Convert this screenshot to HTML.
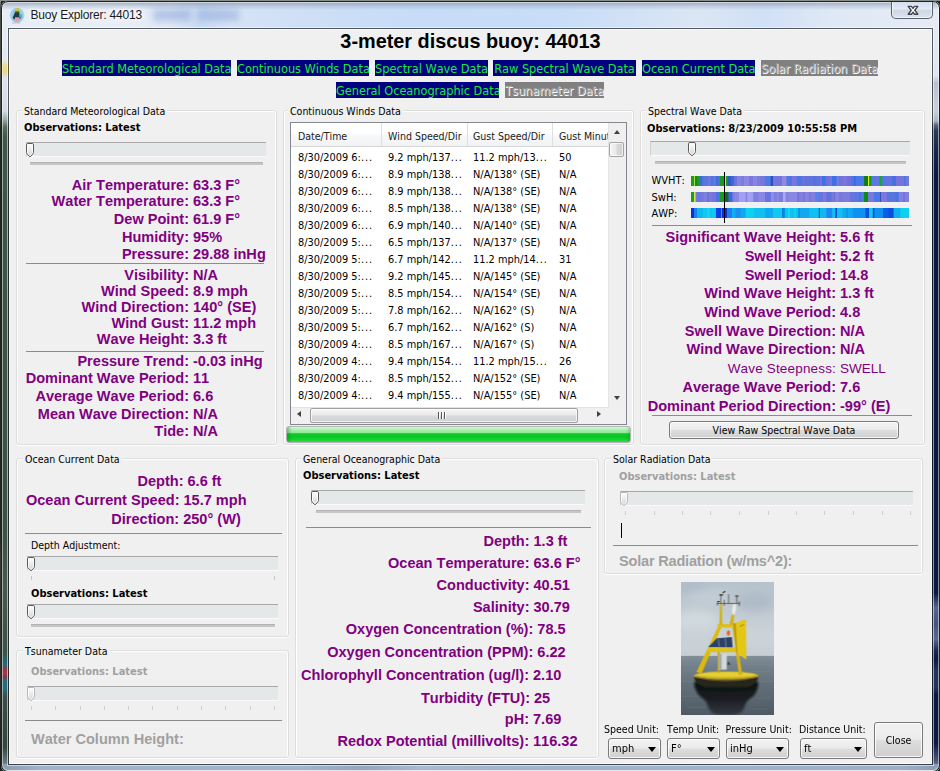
<!DOCTYPE html><html><head><meta charset="utf-8"><title>Buoy Explorer: 44013</title><style>
*{box-sizing:border-box;margin:0;padding:0}
html,body{width:940px;height:771px;overflow:hidden;background:#1c2820}
body{position:relative;font-kerning:none;font-stretch:condensed;font-family:"DejaVu Sans Condensed","DejaVu Sans","Liberation Sans",sans-serif;font-size:10.5px;color:#000}
div,span,svg{position:absolute}
#win{left:1px;top:1px;width:939px;height:771px;border-radius:7px;overflow:hidden;background:#c6dcf8}
#client{left:9px;top:29px;width:923px;height:735px;background:#f0f0f0;box-shadow:inset 0 0 0 1px #fbfbfb}
.t{white-space:nowrap;line-height:13px;height:13px}
.tb{white-space:nowrap;line-height:13px;height:13px;font-weight:bold;font-size:11px}
.dis{color:#a0a0a0}
.a{white-space:nowrap;font:bold 14.55px "Liberation Sans",sans-serif;font-kerning:none;color:#800080;line-height:17px;height:17px}
.ar{text-align:right}
.gb{border:1px solid #dddddd;border-radius:3px;box-shadow:inset 1px 1px 0 #fff,inset -1px 0 0 #fff,0 1px 0 #fff}
.cap{background:#f0f0f0;white-space:nowrap;line-height:13px;height:13px;padding:0 2px}
.tab{height:16px;line-height:17px;font-size:12.6px;white-space:nowrap;background:#000080;color:#1fe83a;text-align:center;overflow:hidden}
.tab.off{background:#808080;color:#a4a4a4;text-shadow:1px 1px 0 #fff}
.hr{height:1px;background:#8c8c8c}
.trk{height:15px;background:#e5e8e9;border-top:1px solid #a8a8a8;border-bottom:1px solid #fafafa;border-left:1px solid #d0d0d0}
.chan{height:3px;background:#c6c6c6;border-top:1px solid #b4b4b4}
.el{position:static;letter-spacing:.9px}
.tick{width:1px;height:4px;background:#c0c0c0}

.btn{border:1px solid #7a7a7a;border-radius:3px;background:linear-gradient(#f2f2f2 0%,#ebebeb 48%,#dddddd 52%,#cfcfcf 100%);box-shadow:inset 0 0 0 1px rgba(255,255,255,.8)}
.combo{border:1px solid #7a7a7a;border-radius:3px;background:linear-gradient(#f2f2f2 0%,#ebebeb 48%,#dddddd 52%,#cfcfcf 100%);box-shadow:inset 0 0 0 1px rgba(255,255,255,.8)}
.combo i{right:4px;top:8px;width:0;height:0;border:4.5px solid transparent;border-top:5px solid #000;border-bottom:0;position:absolute}
</style></head><body>
<div style="left:0;top:0;width:940px;height:1px;background:#8a8f8c"></div>
<div style="left:0;top:0;width:1px;height:771px;background:linear-gradient(#9a9f9c 0,#4a4f4c 6px,#4a4c4a 60px,#6a6440 68px,#4a4c4a 76px,#444846 112px,#1c2820 128px,#1c2820 530px,#3a3a34 560px,#2a2e2a 700px,#1a1e1c 771px)"></div>
<div id="win">
<div style="left:0;top:0;width:939px;height:28px;background:linear-gradient(90deg,#e6edf6 0,#e9eff7 120px,#dfe8f5 170px,#c9dbf3 200px,#d6e3f5 232px,#cfdff5 300px,#c6dcf8 420px,#c8ddf7 560px,#d3e2f5 640px,#dbe6f4 700px,#d0e0f5 760px,#dfe8f5 830px,#e6ecf5 939px)"></div>
<div style="left:0;top:0;width:939px;height:9px;background:linear-gradient(rgba(120,135,160,.55) 0,rgba(120,135,160,.55) 2px,rgba(140,155,180,.35) 5px,rgba(160,180,210,0) 9px)"></div>
<div style="left:152px;top:8px;width:38px;height:12px;background:rgba(110,140,205,.38);filter:blur(3px)"></div>
<div style="left:196px;top:8px;width:42px;height:12px;background:rgba(110,140,205,.34);filter:blur(3px)"></div>
<div style="left:0;top:26px;width:8px;height:745px;background:linear-gradient(#e4ebf5 0,#e2e8f0 33px,#ecdc90 38px,#e8d888 45px,#dde3ec 51px,#d2dae4 84px,#a0aeae 92px,#5a6a60 100px,#42564a 110px,#3e5448 250px,#3c5246 500px,#465a50 560px,#3c5246 624px,#2c6068 632px,#2a6a72 638px,#8a3a46 642px,#a83848 646px,#7c3c4a 650px,#2a6a78 654px,#2c6a78 662px,#3a4e46 670px,#33463c 720px,#6a7c84 736px,#9aaec4 745px)"></div>
<div style="left:931px;top:26px;width:8px;height:745px;background:linear-gradient(#e4ebf5 0,#dfe6f0 49px,#b6c1d2 56px,#c2cad8 70px,#c8d0dc 84px,#aab6c6 94px,#5a6880 98px,#2a3a54 104px,#16244a 125px,#0c1840 150px,#0c1840 566px,#3a4a70 575px,#566690 581px,#44547a 596px,#5a6a8c 612px,#1a2850 624px,#0c1840 632px,#26345a 644px,#26345a 660px,#0c1840 668px,#0c1840 716px,#4a5a7a 734px,#9aaec4 745px)"></div>
<div style="left:0;top:763px;width:939px;height:8px;background:linear-gradient(90deg,#8a9cae 0,#9fb2c6 40px,#a0b4cc 300px,#93a6bc 360px,#a8bacd 420px,#a0b4cc 520px,#9db0c6 900px,#8a9cb4 939px)"></div>
</div>
<div style="left:1px;top:1px;width:939px;height:771px;border:1px solid #1c2226;border-radius:7px;box-shadow:inset 0 0 0 1px rgba(255,255,255,.5)"></div>
<div style="left:6px;top:770px;width:929px;height:1px;background:rgba(255,255,255,.38)"></div>
<div style="left:7px;top:27px;width:927px;height:739px;border:1px solid rgba(255,255,255,.55)"></div>
<div style="left:8px;top:28px;width:925px;height:737px;border:1px solid rgba(16,22,26,.68)"></div>
<svg style="left:7px;top:4.5px" width="21" height="21" viewBox="0 0 19 19"><defs><linearGradient id="ig" x1="0" x2="1" y1="0" y2="0"><stop offset="0" stop-color="#a4cfe6"/><stop offset=".5" stop-color="#8cc4ea"/><stop offset="1" stop-color="#aaddc6"/></linearGradient><filter id="ib" x="-20%" y="-20%" width="140%" height="140%"><feGaussianBlur stdDeviation="0.7"/></filter><filter id="ib2" x="-20%" y="-20%" width="140%" height="140%"><feGaussianBlur stdDeviation="0.45"/></filter></defs><circle cx="9.2" cy="9.3" r="6.6" fill="url(#ig)" filter="url(#ib)"/><g filter="url(#ib2)"><path d="M7.6 3h3.6l.2 3.4h-4z" fill="#c9c444"/><path d="M7.4 6.2h3.6l.9 5-1.2 1.6h-4.6l-.8-1.4z" fill="#1d3a46"/><path d="M7.3 5.8h3.6v1.6h-3.6z" fill="#3a5a1c"/><path d="M10.8 8.4h3v2.8h-2.6z" fill="#5aa2f4"/><path d="M7.2 11h4l.3 3.2h-4.6z" fill="#eb9aa6"/><path d="M5.2 11.6l1.6-.8.2 1.6zM11.6 10.9l1 .9-.9 1z" fill="#2a2a30"/><path d="M4.5 16.2h7.5" stroke="#a8b0b8" stroke-width=".7"/></g></svg>
<span style="left:30.5px;top:7px;height:16px;line-height:16px;font:12px/16px 'Liberation Sans',sans-serif;letter-spacing:-0.2px;color:#1a1a1a;white-space:nowrap;text-shadow:0 0 6px #fff,0 0 6px #fff,0 0 3px #fff">Buoy Explorer: 44013</span>
<div style="left:891px;top:2px;width:42px;height:17px;border:1px solid #56606e;border-top:0;border-radius:0 0 5px 5px;background:linear-gradient(#d3deee 0,#e2eaf6 45%,#cdd6e2 50%,#dbe3ee 100%);box-shadow:inset 1px 0 0 rgba(255,255,255,.6),inset -1px -1px 0 rgba(255,255,255,.6)"></div>
<svg style="left:904.5px;top:3.5px" width="16" height="12.8" viewBox="0 0 15 12"><path d="M3 2.2H6.1L7.5 4.1L8.9 2.2H12L9.2 5.9L12 9.6H8.9L7.5 7.7L6.1 9.6H3L5.8 5.9Z" fill="#fff" stroke="#40464e" stroke-width="1.3" stroke-linejoin="round"/></svg>
<div id="client"></div>
<span style="left:9px;width:923px;top:29px;text-align:center;font:bold 19.85px 'Liberation Sans',sans-serif;font-kerning:none;line-height:24px;white-space:nowrap">3-meter discus buoy: 44013</span>
<span class="tab" style="left:62px;top:60px;width:169px">Standard Meteorological Data</span>
<span class="tab" style="left:237px;top:60px;width:132px">Continuous Winds Data</span>
<span class="tab" style="left:375px;top:60px;width:113px">Spectral Wave Data</span>
<span class="tab" style="left:493px;top:60px;width:143px">Raw Spectral Wave Data</span>
<span class="tab" style="left:642px;top:60px;width:113px">Ocean Current Data</span>
<span class="tab off" style="left:761px;top:60px;width:117px">Solar Radiation Data</span>
<span class="tab" style="left:336px;top:82px;width:163px">General Oceanographic Data</span>
<span class="tab off" style="left:505px;top:82px;width:99px">Tsunameter Data</span>
<div class="gb" style="left:16px;top:110px;width:261px;height:335px"></div>
<span class="cap" style="left:22px;top:105px">Standard Meteorological Data</span>
<span class="tb" style="left:24px;top:121px;">Observations: Latest</span>
<div class="trk" style="left:26px;top:142px;width:240px"></div>
<svg width="8" height="15" viewBox="0 0 8 15" style="left:26px;top:143px"><defs><linearGradient id="tg1" x1="0" x2="0" y1="0" y2="1"><stop offset="0" stop-color="#ffffff"/><stop offset="0.45" stop-color="#ececec"/><stop offset="1" stop-color="#d0d0d0"/></linearGradient></defs><path d="M0.5 1.8 Q0.5 0.5 1.8 0.5 H6.2 Q7.5 0.5 7.5 1.8 V9.6 Q7.4 11.2 4 13.8 Q0.6 11.2 0.5 9.6 Z" fill="url(#tg1)" stroke="#5a5a5a" stroke-width="1"/><path d="M1.5 2 V9.6 Q1.8 10.8 4 12.5 Q6.2 10.8 6.5 9.6 V2" fill="none" stroke="#fff" stroke-width="1" opacity=".85"/></svg>
<div class="chan" style="left:30px;top:162px;width:233px"></div>
<span class="a ar" style="right:751px;top:176.5px;">Air Temperature:</span>
<span class="a" style="left:193px;top:176.5px;">63.3 F°</span>
<span class="a ar" style="right:751px;top:193.4px;">Water Temperature:</span>
<span class="a" style="left:193px;top:193.4px;">63.3 F°</span>
<span class="a ar" style="right:751px;top:210.7px;">Dew Point:</span>
<span class="a" style="left:193px;top:210.7px;">61.9 F°</span>
<span class="a ar" style="right:751px;top:228.9px;">Humidity:</span>
<span class="a" style="left:193px;top:228.9px;">95%</span>
<span class="a ar" style="right:751px;top:245.9px;">Pressure:</span>
<span class="a" style="left:193px;top:245.9px;">29.88 inHg</span>
<div class="hr" style="left:26px;top:263px;width:238px"></div>
<span class="a ar" style="right:751px;top:267.1px;">Visibility:</span>
<span class="a" style="left:193px;top:267.1px;">N/A</span>
<span class="a ar" style="right:751px;top:282.8px;">Wind Speed:</span>
<span class="a" style="left:193px;top:282.8px;">8.9 mph</span>
<span class="a ar" style="right:751px;top:298.6px;">Wind Direction:</span>
<span class="a" style="left:193px;top:298.6px;">140° (SE)</span>
<span class="a ar" style="right:751px;top:315.1px;">Wind Gust:</span>
<span class="a" style="left:193px;top:315.1px;">11.2 mph</span>
<span class="a ar" style="right:751px;top:331.1px;">Wave Height:</span>
<span class="a" style="left:193px;top:331.1px;">3.3 ft</span>
<div class="hr" style="left:26px;top:351px;width:238px"></div>
<span class="a ar" style="right:751px;top:352.8px;">Pressure Trend:</span>
<span class="a" style="left:193px;top:352.8px;">-0.03 inHg</span>
<span class="a ar" style="right:751px;top:370.1px;">Dominant Wave Period:</span>
<span class="a" style="left:193px;top:370.1px;">11</span>
<span class="a ar" style="right:751px;top:387.7px;">Average Wave Period:</span>
<span class="a" style="left:193px;top:387.7px;">6.6</span>
<span class="a ar" style="right:751px;top:405.9px;">Mean Wave Direction:</span>
<span class="a" style="left:193px;top:405.9px;">N/A</span>
<span class="a ar" style="right:751px;top:423.4px;">Tide:</span>
<span class="a" style="left:193px;top:423.4px;">N/A</span>
<div class="gb" style="left:283px;top:110px;width:351px;height:335px"></div>
<span class="cap" style="left:288px;top:105px">Continuous Winds Data</span>
<div style="left:290px;top:122px;width:337px;height:303px;background:#fff;border:1px solid #828790"></div>
<div style="left:291px;top:123px;width:317px;height:24px;background:linear-gradient(#ffffff 0%,#ffffff 45%,#f7f8fa 55%,#f1f2f4 100%);border-bottom:1px solid #d5d5d5"></div>
<div style="left:381px;top:123px;width:1px;height:23px;background:#dedfe1"></div>
<div style="left:467px;top:123px;width:1px;height:23px;background:#dedfe1"></div>
<div style="left:552px;top:123px;width:1px;height:23px;background:#dedfe1"></div>
<span class="t" style="left:298px;top:130px;color:#222">Date/Time</span>
<span class="t" style="left:388px;top:130px;color:#222">Wind Speed/Dir</span>
<span class="t" style="left:473px;top:130px;color:#222">Gust Speed/Dir</span>
<div style="left:553px;top:123px;width:55px;height:22px;overflow:hidden"><span class="t" style="left:6px;top:7px;color:#222">Gust Minutes</span></div>
<span class="t" style="left:298px;top:151px;font-size:10.9px">8/30/2009 6:<span class="el">...</span></span>
<span class="t" style="left:388px;top:151px;font-size:10.9px">9.2 mph/137<span class="el">...</span></span>
<span class="t" style="left:473px;top:151px;font-size:10.9px">11.2 mph/13<span class="el">...</span></span>
<span class="t" style="left:559px;top:151px;font-size:10.9px">50</span>
<span class="t" style="left:298px;top:168px;font-size:10.9px">8/30/2009 6:<span class="el">...</span></span>
<span class="t" style="left:388px;top:168px;font-size:10.9px">8.9 mph/138<span class="el">...</span></span>
<span class="t" style="left:473px;top:168px;font-size:10.9px">N/A/138° (SE)</span>
<span class="t" style="left:559px;top:168px;font-size:10.9px">N/A</span>
<span class="t" style="left:298px;top:185px;font-size:10.9px">8/30/2009 6:<span class="el">...</span></span>
<span class="t" style="left:388px;top:185px;font-size:10.9px">8.9 mph/138<span class="el">...</span></span>
<span class="t" style="left:473px;top:185px;font-size:10.9px">N/A/138° (SE)</span>
<span class="t" style="left:559px;top:185px;font-size:10.9px">N/A</span>
<span class="t" style="left:298px;top:202px;font-size:10.9px">8/30/2009 6:<span class="el">...</span></span>
<span class="t" style="left:388px;top:202px;font-size:10.9px">8.5 mph/138<span class="el">...</span></span>
<span class="t" style="left:473px;top:202px;font-size:10.9px">N/A/138° (SE)</span>
<span class="t" style="left:559px;top:202px;font-size:10.9px">N/A</span>
<span class="t" style="left:298px;top:219px;font-size:10.9px">8/30/2009 6:<span class="el">...</span></span>
<span class="t" style="left:388px;top:219px;font-size:10.9px">6.9 mph/140<span class="el">...</span></span>
<span class="t" style="left:473px;top:219px;font-size:10.9px">N/A/140° (SE)</span>
<span class="t" style="left:559px;top:219px;font-size:10.9px">N/A</span>
<span class="t" style="left:298px;top:236px;font-size:10.9px">8/30/2009 5:<span class="el">...</span></span>
<span class="t" style="left:388px;top:236px;font-size:10.9px">6.5 mph/137<span class="el">...</span></span>
<span class="t" style="left:473px;top:236px;font-size:10.9px">N/A/137° (SE)</span>
<span class="t" style="left:559px;top:236px;font-size:10.9px">N/A</span>
<span class="t" style="left:298px;top:253px;font-size:10.9px">8/30/2009 5:<span class="el">...</span></span>
<span class="t" style="left:388px;top:253px;font-size:10.9px">6.7 mph/142<span class="el">...</span></span>
<span class="t" style="left:473px;top:253px;font-size:10.9px">11.2 mph/14<span class="el">...</span></span>
<span class="t" style="left:559px;top:253px;font-size:10.9px">31</span>
<span class="t" style="left:298px;top:270px;font-size:10.9px">8/30/2009 5:<span class="el">...</span></span>
<span class="t" style="left:388px;top:270px;font-size:10.9px">9.2 mph/145<span class="el">...</span></span>
<span class="t" style="left:473px;top:270px;font-size:10.9px">N/A/145° (SE)</span>
<span class="t" style="left:559px;top:270px;font-size:10.9px">N/A</span>
<span class="t" style="left:298px;top:287px;font-size:10.9px">8/30/2009 5:<span class="el">...</span></span>
<span class="t" style="left:388px;top:287px;font-size:10.9px">8.5 mph/154<span class="el">...</span></span>
<span class="t" style="left:473px;top:287px;font-size:10.9px">N/A/154° (SE)</span>
<span class="t" style="left:559px;top:287px;font-size:10.9px">N/A</span>
<span class="t" style="left:298px;top:304px;font-size:10.9px">8/30/2009 5:<span class="el">...</span></span>
<span class="t" style="left:388px;top:304px;font-size:10.9px">7.8 mph/162<span class="el">...</span></span>
<span class="t" style="left:473px;top:304px;font-size:10.9px">N/A/162° (S)</span>
<span class="t" style="left:559px;top:304px;font-size:10.9px">N/A</span>
<span class="t" style="left:298px;top:321px;font-size:10.9px">8/30/2009 5:<span class="el">...</span></span>
<span class="t" style="left:388px;top:321px;font-size:10.9px">6.7 mph/162<span class="el">...</span></span>
<span class="t" style="left:473px;top:321px;font-size:10.9px">N/A/162° (S)</span>
<span class="t" style="left:559px;top:321px;font-size:10.9px">N/A</span>
<span class="t" style="left:298px;top:338px;font-size:10.9px">8/30/2009 4:<span class="el">...</span></span>
<span class="t" style="left:388px;top:338px;font-size:10.9px">8.5 mph/167<span class="el">...</span></span>
<span class="t" style="left:473px;top:338px;font-size:10.9px">N/A/167° (S)</span>
<span class="t" style="left:559px;top:338px;font-size:10.9px">N/A</span>
<span class="t" style="left:298px;top:355px;font-size:10.9px">8/30/2009 4:<span class="el">...</span></span>
<span class="t" style="left:388px;top:355px;font-size:10.9px">9.4 mph/154<span class="el">...</span></span>
<span class="t" style="left:473px;top:355px;font-size:10.9px">11.2 mph/15<span class="el">...</span></span>
<span class="t" style="left:559px;top:355px;font-size:10.9px">26</span>
<span class="t" style="left:298px;top:372px;font-size:10.9px">8/30/2009 4:<span class="el">...</span></span>
<span class="t" style="left:388px;top:372px;font-size:10.9px">8.5 mph/152<span class="el">...</span></span>
<span class="t" style="left:473px;top:372px;font-size:10.9px">N/A/152° (SE)</span>
<span class="t" style="left:559px;top:372px;font-size:10.9px">N/A</span>
<span class="t" style="left:298px;top:389px;font-size:10.9px">8/30/2009 4:<span class="el">...</span></span>
<span class="t" style="left:388px;top:389px;font-size:10.9px">9.4 mph/155<span class="el">...</span></span>
<span class="t" style="left:473px;top:389px;font-size:10.9px">N/A/155° (SE)</span>
<span class="t" style="left:559px;top:389px;font-size:10.9px">N/A</span>
<div style="left:608px;top:123px;width:18px;height:284px;background:#efefef;border-left:1px solid #e6e6e6"></div>
<div style="left:613.5px;top:130px;width:0;height:0;border:3.5px solid transparent;border-bottom:4px solid #404040;border-top:0"></div>
<div style="left:609px;top:142px;width:15px;height:15px;border:1px solid #a4a4a4;border-radius:2px;background:linear-gradient(90deg,#f5f5f5 0%,#e9e9eb 48%,#d9dadc 52%,#cfd0d3 100%);box-shadow:inset 0 0 0 1px rgba(255,255,255,.7)"></div>
<div style="left:613.5px;top:396px;width:0;height:0;border:3.5px solid transparent;border-top:4px solid #404040;border-bottom:0"></div>
<div style="left:291px;top:407px;width:318px;height:17px;background:#f0f0f0;border-top:1px solid #e3e3e3"></div>
<div style="left:609px;top:407px;width:17px;height:17px;background:#f0f0f0"></div>
<div style="left:297px;top:411px;width:0;height:0;border:3.5px solid transparent;border-right:4px solid #404040;border-left:0"></div>
<div style="left:597px;top:411px;width:0;height:0;border:3.5px solid transparent;border-left:4px solid #404040;border-right:0"></div>
<div style="left:310px;top:408px;width:268px;height:15px;border:1px solid #a0a0a0;border-radius:2px;background:linear-gradient(#f5f5f5 0%,#e9e9eb 48%,#d9dadc 52%,#cfd0d3 100%);box-shadow:inset 0 0 0 1px rgba(255,255,255,.7)"><div style="left:127px;top:3px;width:1px;height:7px;background:#555;box-shadow:1px 0 0 #fff,3px 0 0 #555,4px 0 0 #fff,6px 0 0 #555,7px 0 0 #fff"></div></div>
<div style="left:286px;top:426px;width:345px;height:17px;border:1px solid #b4b4b4;border-radius:3px;background:linear-gradient(90deg,rgba(0,110,20,.35) 0,rgba(0,110,20,0) 5px,rgba(0,110,20,0) 339px,rgba(0,110,20,.3) 345px),linear-gradient(#d4f7d6 0%,#aaeeb0 20%,#8ce894 40%,#12cc2a 44%,#08c622 60%,#18d032 85%,#3cdc52 100%)"></div>
<div class="gb" style="left:640px;top:110px;width:285px;height:335px"></div>
<span class="cap" style="left:646px;top:105px">Spectral Wave Data</span>
<span class="tb" style="left:647px;top:122px;">Observations: 8/23/2009 10:55:58 PM</span>
<div class="trk" style="left:650px;top:141px;width:260px"></div>
<svg width="8" height="15" viewBox="0 0 8 15" style="left:688px;top:142px"><defs><linearGradient id="tg2" x1="0" x2="0" y1="0" y2="1"><stop offset="0" stop-color="#ffffff"/><stop offset="0.45" stop-color="#ececec"/><stop offset="1" stop-color="#d0d0d0"/></linearGradient></defs><path d="M0.5 1.8 Q0.5 0.5 1.8 0.5 H6.2 Q7.5 0.5 7.5 1.8 V9.6 Q7.4 11.2 4 13.8 Q0.6 11.2 0.5 9.6 Z" fill="url(#tg2)" stroke="#5a5a5a" stroke-width="1"/><path d="M1.5 2 V9.6 Q1.8 10.8 4 12.5 Q6.2 10.8 6.5 9.6 V2" fill="none" stroke="#fff" stroke-width="1" opacity=".85"/></svg>
<div class="chan" style="left:655px;top:161px;width:251px"></div>
<span class="t" style="left:651.5px;top:174px;font-size:11px">WVHT:</span>
<span class="t" style="left:651.5px;top:191px;font-size:11px">SwH:</span>
<span class="t" style="left:651.5px;top:207px;font-size:11px">AWP:</span>
<div style="left:691px;top:176px;width:218px;height:10px;background:linear-gradient(90deg,#1f9a22 0.35px 2.65px,#a8e040 3.35px 3.65px,#168a1a 4.35px 5.65px,#209a24 6.35px 7.65px,#3a6cd8 8.35px 10.65px,#4a78e0 11.35px 12.65px,#5878e0 13.35px 16.65px,#6a78e0 17.35px 19.65px,#4a74e0 20.35px 21.65px,#5a7ae0 22.35px 24.65px,#3e6ed8 25.35px 26.65px,#4a70da 27.35px 28.65px,#1a9a1e 29.35px 32.65px,#106010 33.35px 33.65px,#d8e840 34.35px 34.65px,#1c9820 35.35px 36.65px,#2c5ccc 37.35px 39.65px,#3c68d8 40.35px 42.65px,#6a74dc 43.35px 45.65px,#8484e0 46.35px 49.65px,#7c7cdc 50.35px 52.65px,#8a88e4 53.35px 57.65px,#7a78da 58.35px 61.65px,#8686e0 62.35px 65.65px,#7c7cdc 66.35px 68.65px,#7878dc 69.35px 73.65px,#4a7ce8 74.35px 79.25px,#2a50c0 79.95px 81.65px,#7474dc 82.35px 90.65px,#8c8ce4 91.35px 95.05px,#7070dc 95.75px 96.65px,#4a78e4 97.35px 100.65px,#7a74dc 101.35px 105.25px,#4a78e4 105.95px 107.65px,#5a70e0 108.35px 109.15px,#4a78e4 109.85px 111.15px,#7070d8 111.85px 113.65px,#6070dc 114.35px 116.25px,#5a74e0 116.95px 119.65px,#6a70dc 120.35px 121.65px,#5074e0 122.35px 124.65px,#5a74e0 125.35px 128.25px,#7a70d8 128.95px 130.65px,#3a70e8 131.35px 134.15px,#6a70dc 134.85px 137.65px,#7474dc 138.35px 140.65px,#3a70e8 141.35px 145.15px,#7a78dc 145.85px 147.65px,#6a74dc 148.35px 151.15px,#7a74dc 151.85px 155.65px,#7070d8 156.35px 159.65px,#4a78e8 160.35px 162.65px,#3a68dc 163.35px 164.15px,#4a78e8 164.85px 172.85px,#0e7a1a 173.55px 176.65px,#e0f020 177.35px 177.65px,#1a9a22 178.35px 180.15px,#5a78e4 180.85px 184.65px,#6476e0 185.35px 188.15px,#18a828 188.85px 190.95px,#5a74e4 191.65px 195.65px,#6472e0 196.35px 200.55px,#4a70e0 201.25px 204.65px,#7474dc 205.35px 212.45px,#4a78e4 213.15px 214.95px,#7878dc 215.65px 217.65px)"></div>
<div style="left:691px;top:192px;width:218px;height:10px;background:linear-gradient(90deg,#1f9a22 0.35px 2.65px,#d8e850 3.35px 3.65px,#a0a8e8 4.35px 4.85px,#6a78e0 5.55px 9.95px,#7c78dc 10.65px 12.65px,#8080e0 13.35px 15.65px,#6a74dc 16.35px 17.65px,#7c78dc 18.35px 20.65px,#7474dc 21.35px 24.45px,#4a74e0 25.15px 28.65px,#1a9a1e 29.35px 33.15px,#0e6a20 33.85px 35.65px,#1a5a60 36.35px 37.15px,#3a68e0 37.85px 41.05px,#8a7adc 41.75px 43.15px,#8888e4 43.85px 47.45px,#a0a0f4 48.15px 54.25px,#8484e0 54.95px 55.95px,#a0a0f4 56.65px 61.85px,#8080e0 62.55px 66.95px,#8a88e4 67.65px 73.65px,#6a74e0 74.35px 79.65px,#9090ec 80.35px 82.25px,#8080e0 82.95px 85.65px,#8888e4 86.35px 87.65px,#7c7cdc 88.35px 91.65px,#a8a8f8 92.35px 94.15px,#8484e0 94.85px 97.65px,#8a88e4 98.35px 106.05px,#7470d8 106.75px 107.65px,#8080e0 108.35px 111.65px,#7878dc 112.35px 113.65px,#8484e0 114.35px 117.65px,#7a78dc 118.35px 119.65px,#8080e0 120.35px 123.95px,#5a80ec 124.65px 127.35px,#6a74dc 128.05px 131.65px,#8078dc 132.35px 135.05px,#6070dc 135.75px 140.15px,#7a78dc 140.85px 142.65px,#6a6cd4 143.35px 143.65px,#8484e0 144.35px 147.65px,#7878dc 148.35px 151.15px,#7c7cdc 151.85px 158.65px,#6a74dc 159.35px 163.05px,#5a78e4 163.75px 167.65px,#4a74e4 168.35px 169.65px,#5a78e4 170.35px 172.45px,#0e8a1a 173.15px 176.65px,#7a78dc 177.35px 182.65px,#4a78e8 183.35px 189.05px,#2a3a90 189.75px 189.65px,#7a78dc 190.35px 195.45px,#5a74e0 196.15px 203.95px,#4a74e4 204.65px 207.35px,#8080e0 208.05px 211.65px,#7474dc 212.35px 213.65px,#8080e0 214.35px 217.65px)"></div>
<div style="left:691px;top:208px;width:218px;height:10px;background:linear-gradient(90deg,#0a30e0 0.35px 2.65px,#1a80f0 3.35px 5.65px,#10b8f0 6.35px 11.65px,#10c8f0 12.35px 15.65px,#18d0f0 16.35px 18.65px,#10c0f0 19.35px 20.65px,#10c8f0 21.35px 24.45px,#0a40e8 25.15px 29.65px,#20a0f0 30.35px 30.65px,#0a30d0 31.35px 35.65px,#1a80f0 36.35px 40.65px,#10b0f0 41.35px 44.05px,#1a90f0 44.75px 49.15px,#10a8f0 49.85px 54.25px,#10d0f0 54.95px 62.65px,#10c0f0 63.35px 68.65px,#10c0f0 69.35px 73.65px,#10a8f0 74.35px 81.45px,#10c8f0 82.15px 90.65px,#0a80e8 91.35px 93.35px,#10c0f0 94.05px 96.65px,#10d8f0 97.35px 98.65px,#10c0f0 99.35px 102.65px,#10d0f0 103.35px 104.65px,#10c0f0 105.35px 106.95px,#0a90e8 107.65px 108.65px,#10a8f0 109.35px 118.05px,#10c0f0 118.75px 127.35px,#0a50d8 128.05px 128.65px,#10b8f0 129.35px 135.05px,#1a88f0 135.75px 140.95px,#10c0f0 141.65px 143.95px,#0a50d8 144.65px 145.65px,#10c0f0 146.35px 151.15px,#10a8f0 151.85px 154.65px,#0a98ec 155.35px 156.65px,#10a8f0 157.35px 161.35px,#1090f0 162.05px 174.15px,#0a50e0 174.85px 177.65px,#10c8f0 178.35px 181.35px,#0a40d8 182.05px 183.05px,#1090f0 183.75px 191.65px,#0a60e8 192.35px 197.15px,#0a50e0 197.85px 202.25px,#10b0f0 202.95px 209.05px,#10d0f0 209.75px 217.65px)"></div>
<div style="left:724px;top:172px;width:1px;height:51px;background:#000"></div>
<div class="hr" style="left:652px;top:225px;width:260px"></div>
<span class="a ar" style="right:104px;top:228.9px;">Significant Wave Height:</span>
<span class="a" style="left:840px;top:228.9px;">5.6 ft</span>
<span class="a ar" style="right:104px;top:247.7px;">Swell Height:</span>
<span class="a" style="left:840px;top:247.7px;">5.2 ft</span>
<span class="a ar" style="right:104px;top:267.1px;">Swell Period:</span>
<span class="a" style="left:840px;top:267.1px;">14.8</span>
<span class="a ar" style="right:104px;top:285.1px;">Wind Wave Height:</span>
<span class="a" style="left:840px;top:285.1px;">1.3 ft</span>
<span class="a ar" style="right:104px;top:303.9px;">Wind Wave Period:</span>
<span class="a" style="left:840px;top:303.9px;">4.8</span>
<span class="a ar" style="right:104px;top:323.1px;">Swell Wave Direction:</span>
<span class="a" style="left:840px;top:323.1px;">N/A</span>
<span class="a ar" style="right:104px;top:341.1px;">Wind Wave Direction:</span>
<span class="a" style="left:840px;top:341.1px;">N/A</span>
<span class="a ar" style="right:104px;top:360.1px;font-weight:normal;font-size:13.5px;letter-spacing:0.17px">Wave Steepness:</span>
<span class="a" style="left:840px;top:360.1px;font-weight:normal;font-size:13.5px">SWELL</span>
<span class="a ar" style="right:104px;top:379.1px;">Average Wave Period:</span>
<span class="a" style="left:840px;top:379.1px;">7.6</span>
<span class="a ar" style="right:104px;top:398.1px;">Dominant Period Direction:</span>
<span class="a" style="left:840px;top:398.1px;">-99° (E)</span>
<div class="hr" style="left:652px;top:415px;width:260px"></div>
<div class="btn" style="left:669px;top:421px;width:230px;height:18px"><span class="t" style="left:0;right:0;top:2px;text-align:center">View Raw Spectral Wave Data</span></div>
<div class="gb" style="left:16px;top:458px;width:273px;height:179px"></div>
<span class="cap" style="left:23px;top:453px">Ocean Current Data</span>
<span class="a ar" style="right:756.5px;top:473.1px;">Depth:</span>
<span class="a" style="left:187.5px;top:473.1px;">6.6 ft</span>
<span class="a ar" style="right:760.5px;top:492.3px;">Ocean Current Speed:</span>
<span class="a" style="left:183.5px;top:492.3px;">15.7 mph</span>
<span class="a ar" style="right:760.8px;top:511.4px;">Direction:</span>
<span class="a" style="left:183.2px;top:511.4px;">250° (W)</span>
<div class="hr" style="left:25px;top:533px;width:257px"></div>
<span class="t" style="left:31px;top:539px;">Depth Adjustment:</span>
<div class="trk" style="left:27px;top:556px;width:251px"></div>
<svg width="8" height="15" viewBox="0 0 8 15" style="left:27px;top:557px"><defs><linearGradient id="tg3" x1="0" x2="0" y1="0" y2="1"><stop offset="0" stop-color="#ffffff"/><stop offset="0.45" stop-color="#ececec"/><stop offset="1" stop-color="#d0d0d0"/></linearGradient></defs><path d="M0.5 1.8 Q0.5 0.5 1.8 0.5 H6.2 Q7.5 0.5 7.5 1.8 V9.6 Q7.4 11.2 4 13.8 Q0.6 11.2 0.5 9.6 Z" fill="url(#tg3)" stroke="#5a5a5a" stroke-width="1"/><path d="M1.5 2 V9.6 Q1.8 10.8 4 12.5 Q6.2 10.8 6.5 9.6 V2" fill="none" stroke="#fff" stroke-width="1" opacity=".85"/></svg>
<div class="tick" style="left:31px;top:576px;background:#c4c4c4"></div>
<div class="tick" style="left:274px;top:576px;background:#c4c4c4"></div>
<span class="tb" style="left:31px;top:587px;">Observations: Latest</span>
<div class="trk" style="left:27px;top:604px;width:251px"></div>
<svg width="8" height="15" viewBox="0 0 8 15" style="left:27px;top:605px"><defs><linearGradient id="tg4" x1="0" x2="0" y1="0" y2="1"><stop offset="0" stop-color="#ffffff"/><stop offset="0.45" stop-color="#ececec"/><stop offset="1" stop-color="#d0d0d0"/></linearGradient></defs><path d="M0.5 1.8 Q0.5 0.5 1.8 0.5 H6.2 Q7.5 0.5 7.5 1.8 V9.6 Q7.4 11.2 4 13.8 Q0.6 11.2 0.5 9.6 Z" fill="url(#tg4)" stroke="#5a5a5a" stroke-width="1"/><path d="M1.5 2 V9.6 Q1.8 10.8 4 12.5 Q6.2 10.8 6.5 9.6 V2" fill="none" stroke="#fff" stroke-width="1" opacity=".85"/></svg>
<div class="chan" style="left:31px;top:624px;width:244px"></div>
<div class="gb" style="left:16px;top:650px;width:273px;height:108px"></div>
<span class="cap" style="left:23px;top:645px">Tsunameter Data</span>
<span class="tb dis" style="left:31px;top:665px;">Observations: Latest</span>
<div class="trk" style="left:27px;top:686px;width:251px"></div>
<svg width="8" height="15" viewBox="0 0 8 15" style="left:27px;top:687px"><defs><linearGradient id="tg5" x1="0" x2="0" y1="0" y2="1"><stop offset="0" stop-color="#ffffff"/><stop offset="0.45" stop-color="#ececec"/><stop offset="1" stop-color="#d0d0d0"/></linearGradient></defs><path d="M0.5 1.8 Q0.5 0.5 1.8 0.5 H6.2 Q7.5 0.5 7.5 1.8 V9.6 Q7.4 11.2 4 13.8 Q0.6 11.2 0.5 9.6 Z" fill="url(#tg5)" stroke="#b8b8b8" stroke-width="1"/><path d="M1.5 2 V9.6 Q1.8 10.8 4 12.5 Q6.2 10.8 6.5 9.6 V2" fill="none" stroke="#fff" stroke-width="1" opacity=".85"/></svg>
<div class="tick" style="left:31px;top:706px;background:#cfcfcf"></div>
<div class="tick" style="left:55px;top:706px;background:#cfcfcf"></div>
<div class="tick" style="left:80px;top:706px;background:#cfcfcf"></div>
<div class="tick" style="left:104px;top:706px;background:#cfcfcf"></div>
<div class="tick" style="left:128px;top:706px;background:#cfcfcf"></div>
<div class="tick" style="left:152px;top:706px;background:#cfcfcf"></div>
<div class="tick" style="left:177px;top:706px;background:#cfcfcf"></div>
<div class="tick" style="left:201px;top:706px;background:#cfcfcf"></div>
<div class="tick" style="left:225px;top:706px;background:#cfcfcf"></div>
<div class="tick" style="left:250px;top:706px;background:#cfcfcf"></div>
<div class="tick" style="left:274px;top:706px;background:#cfcfcf"></div>
<div class="hr" style="left:25px;top:720px;width:257px"></div>
<span class="a" style="left:31px;top:731px;color:#a0a0a0">Water Column Height:</span>
<div class="gb" style="left:295px;top:458px;width:304px;height:300px"></div>
<span class="cap" style="left:301px;top:453px">General Oceanographic Data</span>
<span class="tb" style="left:303px;top:469px;">Observations: Latest</span>
<div class="trk" style="left:311px;top:490px;width:274px"></div>
<svg width="8" height="15" viewBox="0 0 8 15" style="left:311px;top:491px"><defs><linearGradient id="tg6" x1="0" x2="0" y1="0" y2="1"><stop offset="0" stop-color="#ffffff"/><stop offset="0.45" stop-color="#ececec"/><stop offset="1" stop-color="#d0d0d0"/></linearGradient></defs><path d="M0.5 1.8 Q0.5 0.5 1.8 0.5 H6.2 Q7.5 0.5 7.5 1.8 V9.6 Q7.4 11.2 4 13.8 Q0.6 11.2 0.5 9.6 Z" fill="url(#tg6)" stroke="#5a5a5a" stroke-width="1"/><path d="M1.5 2 V9.6 Q1.8 10.8 4 12.5 Q6.2 10.8 6.5 9.6 V2" fill="none" stroke="#fff" stroke-width="1" opacity=".85"/></svg>
<div class="chan" style="left:316px;top:510px;width:265px"></div>
<div class="hr" style="left:306px;top:527px;width:285px"></div>
<span class="a ar" style="right:410.5px;top:532.5px;">Depth:</span>
<span class="a" style="left:533.5px;top:532.5px;">1.3 ft</span>
<span class="a ar" style="right:410.5px;top:554.7px;">Ocean Temperature:</span>
<span class="a" style="left:533.5px;top:554.7px;">63.6 F°</span>
<span class="a ar" style="right:410.5px;top:576.8px;">Conductivity:</span>
<span class="a" style="left:533.5px;top:576.8px;">40.51</span>
<span class="a ar" style="right:410.5px;top:599.1px;">Salinity:</span>
<span class="a" style="left:533.5px;top:599.1px;">30.79</span>
<span class="a ar" style="right:406.70000000000005px;top:621.1px;">Oxygen Concentration (%):</span>
<span class="a" style="left:537.3px;top:621.1px;">78.5</span>
<span class="a ar" style="right:406.70000000000005px;top:644.0px;">Oxygen Concentration (PPM):</span>
<span class="a" style="left:537.3px;top:644.0px;">6.22</span>
<span class="a ar" style="right:411px;top:666.6px;">Chlorophyll Concentration (ug/l):</span>
<span class="a" style="left:533px;top:666.6px;">2.10</span>
<span class="a ar" style="right:410px;top:689.6px;">Turbidity (FTU):</span>
<span class="a" style="left:534px;top:689.6px;">25</span>
<span class="a ar" style="right:411px;top:711.2px;">pH:</span>
<span class="a" style="left:533px;top:711.2px;">7.69</span>
<span class="a ar" style="right:411px;top:733.3px;">Redox Potential (millivolts):</span>
<span class="a" style="left:533px;top:733.3px;">116.32</span>
<div class="gb" style="left:604px;top:458px;width:319px;height:116px"></div>
<span class="cap" style="left:611px;top:453px">Solar Radiation Data</span>
<span class="tb dis" style="left:619px;top:470px;">Observations: Latest</span>
<div class="trk" style="left:620px;top:491px;width:293px"></div>
<svg width="8" height="15" viewBox="0 0 8 15" style="left:620px;top:492px"><defs><linearGradient id="tg7" x1="0" x2="0" y1="0" y2="1"><stop offset="0" stop-color="#ffffff"/><stop offset="0.45" stop-color="#ececec"/><stop offset="1" stop-color="#d0d0d0"/></linearGradient></defs><path d="M0.5 1.8 Q0.5 0.5 1.8 0.5 H6.2 Q7.5 0.5 7.5 1.8 V9.6 Q7.4 11.2 4 13.8 Q0.6 11.2 0.5 9.6 Z" fill="url(#tg7)" stroke="#b8b8b8" stroke-width="1"/><path d="M1.5 2 V9.6 Q1.8 10.8 4 12.5 Q6.2 10.8 6.5 9.6 V2" fill="none" stroke="#fff" stroke-width="1" opacity=".85"/></svg>
<div class="tick" style="left:625px;top:511px;background:#cfcfcf"></div>
<div class="tick" style="left:654px;top:511px;background:#cfcfcf"></div>
<div class="tick" style="left:682px;top:511px;background:#cfcfcf"></div>
<div class="tick" style="left:710px;top:511px;background:#cfcfcf"></div>
<div class="tick" style="left:739px;top:511px;background:#cfcfcf"></div>
<div class="tick" style="left:768px;top:511px;background:#cfcfcf"></div>
<div class="tick" style="left:796px;top:511px;background:#cfcfcf"></div>
<div class="tick" style="left:824px;top:511px;background:#cfcfcf"></div>
<div class="tick" style="left:853px;top:511px;background:#cfcfcf"></div>
<div class="tick" style="left:882px;top:511px;background:#cfcfcf"></div>
<div class="tick" style="left:910px;top:511px;background:#cfcfcf"></div>
<div style="left:621px;top:523px;width:1px;height:15px;background:#000"></div>
<div class="hr" style="left:613px;top:545px;width:305px"></div>
<span class="a" style="left:619px;top:553px;color:#a0a0a0;letter-spacing:-0.2px">Solar Radiation (w/ms^2):</span>
<svg style="left:681px;top:582px" width="93" height="133" viewBox="28 22 504 720" preserveAspectRatio="none">
<defs>
<linearGradient id="sky" x1="0" y1="0" x2="0" y2="1"><stop offset="0" stop-color="#b6c2cd"/><stop offset="0.35" stop-color="#c0cad2"/><stop offset="0.7" stop-color="#cad2d8"/><stop offset="1" stop-color="#c6ced4"/></linearGradient>
<linearGradient id="sea" x1="0" y1="0" x2="0" y2="1"><stop offset="0" stop-color="#828f99"/><stop offset="0.15" stop-color="#73818b"/><stop offset="0.5" stop-color="#626f79"/><stop offset="1" stop-color="#4e5b65"/></linearGradient>
<linearGradient id="rf" x1="0" y1="0" x2="0" y2="1"><stop offset="0" stop-color="#101416"/><stop offset="0.5" stop-color="#14181b" stop-opacity=".95"/><stop offset="1" stop-color="#1c2226" stop-opacity=".6"/></linearGradient>
<filter id="bl" x="-5%" y="-5%" width="110%" height="110%"><feGaussianBlur stdDeviation="2"/></filter>
<filter id="bl2" x="-30%" y="-30%" width="160%" height="160%"><feGaussianBlur stdDeviation="6"/></filter>
<filter id="bl3" x="-30%" y="-30%" width="160%" height="160%"><feGaussianBlur stdDeviation="4"/></filter>
<filter id="bl4" x="-30%" y="-50%" width="160%" height="200%"><feGaussianBlur stdDeviation="22"/></filter>
</defs>
<rect x="28" y="22" width="504" height="404" fill="url(#sky)"/>
<g filter="url(#bl4)">
<ellipse cx="110" cy="230" rx="120" ry="55" fill="#d2dadf" opacity=".9"/>
<ellipse cx="180" cy="100" rx="110" ry="35" fill="#c6d0d8" opacity=".8"/>
<ellipse cx="440" cy="330" rx="120" ry="40" fill="#ccd4d9" opacity=".8"/>
<ellipse cx="430" cy="130" rx="110" ry="50" fill="#a9b7c4" opacity=".7"/>
<ellipse cx="80" cy="50" rx="90" ry="30" fill="#a9b7c4" opacity=".6"/>
<ellipse cx="120" cy="380" rx="120" ry="25" fill="#c9d1d6" opacity=".7"/>
</g>
<rect x="28" y="422" width="504" height="320" fill="url(#sea)"/>
<g filter="url(#bl3)" opacity=".22">
<path d="M28 470 H200 M40 500 H150 M380 470 H532 M400 505 H520 M30 560 H100 M450 560 H532 M40 640 H120 M440 650 H520 M60 700 H160 M400 710 H500" stroke="#8694a0" stroke-width="5"/>
</g>
<g filter="url(#bl2)">
<path d="M100 560 H446 Q452 600 420 640 Q380 660 372 700 Q360 742 300 742 H250 Q190 742 176 700 Q168 660 130 640 Q96 600 100 560 Z" fill="url(#rf)"/>
<ellipse cx="272" cy="585" rx="172" ry="30" fill="#0f1214" opacity=".9"/>
</g>
<g filter="url(#bl)">
<path d="M96 532 Q104 578 160 592 H385 Q441 578 449 532 Z" fill="#26261a"/>
<ellipse cx="272" cy="528" rx="177" ry="21" fill="#c9ad20"/>
<ellipse cx="272" cy="523" rx="160" ry="14" fill="#e6ce34"/>
<path d="M98 536 Q272 576 447 536" stroke="#6a5c28" stroke-width="7" fill="none"/>
<path d="M98 534 Q272 570 447 534" stroke="#d8d0a8" stroke-width="2" fill="none" opacity=".6"/>
<path d="M112 510 L232 256 L250 260 L140 516 Z" fill="#dcba10"/>
<path d="M306 258 L320 256 L360 524 L342 526 Z" fill="#d6b40e"/>
<path d="M226 400 H238 V512 H226 Z" fill="#c4a614"/>
<rect x="234" y="412" width="42" height="84" fill="#d4d8d8"/>
<rect x="234" y="412" width="14" height="84" fill="#a2aaaa"/>
<path d="M174 376 H328 V402 H174 Z" fill="#dec21c"/>
<path d="M176 374 L222 326 L304 320 L308 376 Z" fill="#2c4168"/>
<path d="M230 330 L236 372 M268 324 L272 374" stroke="#a6b2c2" stroke-width="3"/>
<path d="M226 250 H318 V268 H226 Z" fill="#dcc01a"/>
<path d="M236 254 L240 138 L250 138 L252 254 Z" fill="#d2b214"/>
<path d="M290 254 L304 196 L316 200 L312 254 Z" fill="#d2b214"/>
<path d="M312 247 L380 223 L382 442 L328 404 Z" fill="#e4c614"/>
<path d="M312 247 L324 246 L334 408 L328 404 Z" fill="#b4960e"/>
<ellipse cx="285" cy="298" rx="9" ry="15" fill="#ea621a"/>
<ellipse cx="316" cy="168" rx="11" ry="32" fill="#e6e8e6" transform="rotate(8 316 168)"/>
<path d="M222 138 H348" stroke="#5e5e4a" stroke-width="5"/>
<path d="M244 138 V92 M286 138 V88 M330 138 V98 M226 150 V126 M262 150 V118 M344 152 V126" stroke="#46463a" stroke-width="4"/>
<path d="M236 92 H256 M322 98 H340 M254 80 L268 72 M226 128 H238" stroke="#26261f" stroke-width="6"/>
<path d="M346 262 L370 252" stroke="#8a7410" stroke-width="4"/>
<path d="M280 470 l6 -14 l5 16" stroke="#222" stroke-width="4" fill="none"/>
</g>
</svg>
<span class="t" style="left:604px;top:723px;">Speed Unit:</span>
<span class="t" style="left:667px;top:723px;">Temp Unit:</span>
<span class="t" style="left:725.5px;top:723px;">Pressure Unit:</span>
<span class="t" style="left:799px;top:723px;">Distance Unit:</span>
<div class="combo" style="left:608px;top:738px;width:53px;height:21px"><span class="t" style="left:3px;top:3px;font-size:11px">mph</span><i></i></div>
<div class="combo" style="left:667px;top:738px;width:53px;height:21px"><span class="t" style="left:3px;top:3px;font-size:11px">F°</span><i></i></div>
<div class="combo" style="left:726px;top:738px;width:63px;height:21px"><span class="t" style="left:3px;top:3px;font-size:11px">inHg</span><i></i></div>
<div class="combo" style="left:800px;top:738px;width:67px;height:21px"><span class="t" style="left:3px;top:3px;font-size:11px">ft</span><i></i></div>
<div class="btn" style="left:874px;top:722px;width:49px;height:36px"><span class="t" style="left:0;right:0;top:11px;text-align:center">Close</span></div>
</body></html>
